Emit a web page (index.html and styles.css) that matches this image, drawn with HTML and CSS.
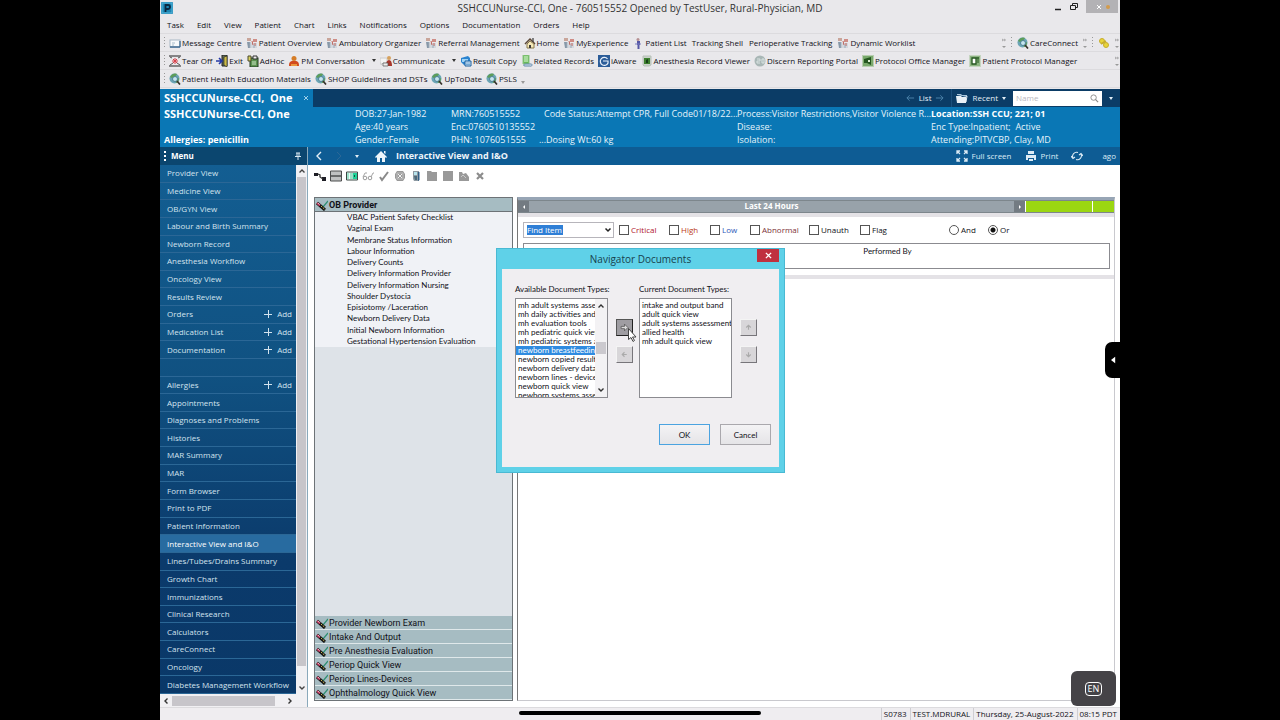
FILE: index.html
```html
<!DOCTYPE html>
<html lang="en">
<head>
<meta charset="utf-8">
<title>SSHCCUNurse-CCI, One - Interactive View and I&amp;O</title>
<link rel="stylesheet" href="styles.css">
</head>
<body>
<svg class="defs" aria-hidden="true">
  <symbol id="i-mail" viewBox="0 0 12 12"><rect x="1" y="3" width="10" height="7" fill="#f7fafc" stroke="#a9b8c5"/><path d="M1 10h10M11 4v6" stroke="#3f6b93" stroke-width="1.3"/><path d="M3 6h3M3 8h2" stroke="#a8bccb"/></symbol>
  <symbol id="i-people" viewBox="0 0 12 12"><rect x="1" y="1" width="4" height="3" fill="#c9a59a"/><rect x="7" y="2" width="4" height="3" fill="#cf8d86"/><path d="M1 5h3v6H2z" fill="#8798a8"/><path d="M5 6h6v5H5z" fill="#d3d8de"/><path d="M6 4l1 4M9 6v3" stroke="#bd5f57"/><path d="M4 5v6M8 8v3" stroke="#9aa9b8"/></symbol>
  <symbol id="i-home" viewBox="0 0 12 12"><path d="M1 7l5-5 5 5" fill="none" stroke="#5b4636" stroke-width="1.5"/><path d="M3 7l3-3 4 3v4H3z" fill="#f5e8b8" stroke="#8c7a4d"/><path d="M5 8h2v3H5z" fill="#3d3a3a"/><path d="M9 1v4" stroke="#444" stroke-width="1.3"/></symbol>
  <symbol id="i-person" viewBox="0 0 12 12"><circle cx="6" cy="2.500" r="1.500" fill="#b58f92"/><path d="M5 4h3v4H7.500v4h-2V8H5z" fill="#5557a5"/><path d="M3 7h6" stroke="#7c7fc0"/></symbol>
  <symbol id="i-tear" viewBox="0 0 12 12"><path d="M0 1h12M0 11h12" stroke="#222"/><path d="M1 2l2 1M11 2l-2 1M1 10l3-2M11 10L8 8" stroke="#555"/><path d="M6 3v6M3 6h6M4 4l4 4M8 4L4 8" stroke="#d8404a"/></symbol>
  <symbol id="i-exit" viewBox="0 0 12 12"><path d="M6 0h5v11H6z" fill="#5f6a55" stroke="#222"/><path d="M8 2l3-1v11l-3-2z" fill="#cdbc47" stroke="#222" stroke-width=".6"/><path d="M0 6h5M3 3l3 3-3 3" fill="none" stroke="#2438a8" stroke-width="1.600"/></symbol>
  <symbol id="i-adhoc" viewBox="0 0 12 12"><rect x="3" y="3" width="8" height="9" fill="#5d9350" stroke="#253b22"/><path d="M1 1h3v5H1z" fill="#d9d05f" stroke="#4b4b2f"/><path d="M6 1h4v3H6z" fill="#eee" stroke="#333"/><path d="M5 7h4M5 9h4" stroke="#cfe6c8"/></symbol>
  <symbol id="i-pm" viewBox="0 0 12 12"><circle cx="6" cy="3.500" r="2.500" fill="#d57d28"/><path d="M1 11c0-5 2-5 5-5s5 0 5 5z" fill="#d1491e"/><path d="M3 10h6" stroke="#f3b148" stroke-width="1.500"/></symbol>
  <symbol id="i-comm" viewBox="0 0 12 12"><path d="M0 3h7v5H3l-2 2V8H0z" fill="#f3f3f3" stroke="#ccc"/><circle cx="9" cy="3" r="2" fill="#d6a15e"/><path d="M6 11c0-4 1-6 3-6s3 2 3 6z" fill="#a8372c"/><path d="M3 8h5v3H3z" fill="#eee" stroke="#555" stroke-width=".7"/></symbol>
  <symbol id="i-copy" viewBox="0 0 12 12"><path d="M1 3l7-2 2 2v5l-6 2-3-3z" fill="#2a83d0"/><path d="M2 4h6v3H2z" fill="#9ed3f5"/><path d="M5 6h6v5H5z" fill="#cfe3f4" stroke="#1a5f9e"/><path d="M6 8h4M6 9.500h4" stroke="#4c91c8" stroke-width=".7"/></symbol>
  <symbol id="i-rel" viewBox="0 0 12 12"><path d="M2 0h6v9H2z" fill="#67b858" stroke="#8dc584"/><path d="M3 2h4M3 4h4M3 6h4" stroke="#e8ffe1"/><path d="M5 9h5c2 0 1 3-1 2H4c-2 0-2-2 1-2z" fill="#dce9f5" stroke="#6388aa"/></symbol>
  <symbol id="i-aware" viewBox="0 0 12 12"><rect width="12" height="12" fill="#2b5c98"/><path d="M9.500 4A4 4 0 1 0 10 8M5 6h5v2.500" fill="none" stroke="#e8f0fa" stroke-width="1.200"/></symbol>
  <symbol id="i-anes" viewBox="0 0 12 12"><path d="M2 1h8v9l-2 1H3l-1-1z" fill="#c8d2c8" stroke="#b7c0b7"/><rect x="3" y="3" width="6" height="6" fill="#3c7f2e"/><path d="M5 5l2-1v4H5z" fill="#173f18"/></symbol>
  <symbol id="i-disc" viewBox="0 0 12 12"><circle cx="6" cy="6" r="5.500" fill="#a9b7b6"/><path d="M3 4h3v2H3v2h3M8 4h2v4H8V4" fill="none" stroke="#d9e3e2"/></symbol>
  <symbol id="i-proto" viewBox="0 0 12 12"><rect x=".5" y=".5" width="11" height="11" fill="#79a96c" stroke="#b7cdb0"/><path d="M2 4l7-2v8L5 8H2z" fill="#24561f"/><path d="M6 5h2v2H6z" fill="#dbeecf"/></symbol>
  <symbol id="i-pproto" viewBox="0 0 12 12"><rect x=".5" y=".5" width="11" height="11" fill="#8db582" stroke="#c4d4bf"/><path d="M3 3h4v6H3z" fill="#fff" stroke="#24561f" stroke-width="1.300"/><path d="M7 3h3M9 2v6" stroke="#24561f"/></symbol>
  <symbol id="i-globe" viewBox="0 0 12 12"><circle cx="5.500" cy="5.500" r="5" fill="#6ba5b5"/><path d="M1 4c2-4 6-4 7-3L6 4 3 5zM6 7l4-2c0 3-1 5-3 5z" fill="#5d9d58"/><circle cx="6" cy="6" r="2.500" fill="#c5e5ef" stroke="#4d8296"/><path d="M8 8l3 3.500" stroke="#39342d" stroke-width="1.700"/></symbol>
  <symbol id="i-link" viewBox="0 0 12 12"><circle cx="4" cy="4" r="2.500" fill="#e8d43a" stroke="#c7ad2b"/><circle cx="8" cy="8" r="2.500" fill="#e8d43a" stroke="#c7ad2b"/><path d="M3 7l5-3" stroke="#c7ad2b" stroke-width="1.500"/></symbol>
  <symbol id="i-chev" viewBox="0 0 4 12"><path d="M0 2l1.500 1L0 4M2 2l1.500 1L2 4" fill="none" stroke="#888" stroke-width=".7"/><path d="M0 9h4l-2 2z" fill="#999"/></symbol>
  <symbol id="i-pen" viewBox="0 0 12 12"><path d="M5 6l2 2 5-6" fill="none" stroke="#2f8f72" stroke-width="1.200"/><path d="M1 4l8 7" stroke="#151515" stroke-width="3"/><path d="M1 4l3 2.500" stroke="#c33d62" stroke-width="2"/><path d="M5 7l4 3.500" stroke="#d1c356" stroke-width="1" stroke-dasharray="1.500 1"/><path d="M2 4l1.500 1.500" stroke="#f4d5dd" stroke-width=".8"/></symbol>
</svg>

<div class="app">
  <header class="titlebar">
    <svg class="logo" viewBox="0 0 12 12"><rect width="12" height="12" rx="1" fill="#1c86b4"/><path d="M1 1h10v10H1z" fill="none" stroke="#5bb6da"/><path d="M4.500 10V3H7a1.800 1.800 0 0 1 0 4H5" fill="none" stroke="#0a2740" stroke-width="1.800"/></svg>
    <h1>SSHCCUNurse-CCI, One - 760515552 Opened by TestUser, Rural-Physician, MD</h1>
    <div class="winbtns">
      <button aria-label="Minimize"><svg viewBox="0 0 8 8"><path d="M1 6.500h6" stroke="#222" stroke-width="1.500"/></svg></button>
      <button aria-label="Restore"><svg viewBox="0 0 8 8"><path d="M2.500 2.500v-2h5v4h-2" fill="none" stroke="#222"/><path d="M.5 2.500h5v4h-5z" fill="none" stroke="#222"/></svg></button>
      <button class="x" aria-label="Close"><svg viewBox="0 0 8 8"><path d="M2 2l4 4M6 2L2 6" stroke="#fff"/></svg><i></i></button>
    </div>
  </header>

  <nav class="menubar" aria-label="Application">
    <button>Task</button><button>Edit</button><button>View</button><button>Patient</button><button>Chart</button><button>Links</button><button>Notifications</button><button>Options</button><button>Documentation</button><button>Orders</button><button>Help</button>
  </nav>

  <div class="toolbars">
    <div class="toolbar">
      <i class="grip"></i>
      <button><svg><use href="#i-mail"/></svg>Message Centre</button>
      <button><svg><use href="#i-people"/></svg>Patient Overview</button>
      <button><svg><use href="#i-people"/></svg>Ambulatory Organizer</button>
      <button><svg><use href="#i-people"/></svg>Referral Management</button>
      <button><svg><use href="#i-home"/></svg>Home</button>
      <button><svg><use href="#i-people"/></svg>MyExperience</button>
      <button><svg><use href="#i-person"/></svg>Patient List</button>
      <button class="plain">Tracking Shell</button>
      <button class="plain">Perioperative Tracking</button>
      <button><svg><use href="#i-people"/></svg>Dynamic Worklist</button>
      <span class="right">
        <svg class="chev"><use href="#i-chev"/></svg><i class="grip"></i>
        <button><svg><use href="#i-globe"/></svg>CareConnect</button>
        <svg class="chev"><use href="#i-chev"/></svg><i class="grip"></i>
        <button aria-label="Shortcuts"><svg><use href="#i-link"/></svg></button>
        <svg class="chev"><use href="#i-chev"/></svg>
      </span>
    </div>
    <div class="toolbar">
      <i class="grip"></i>
      <button><svg><use href="#i-tear"/></svg>Tear Off</button>
      <button><svg><use href="#i-exit"/></svg>Exit</button>
      <button><svg><use href="#i-adhoc"/></svg>AdHoc</button>
      <button class="drop"><svg><use href="#i-pm"/></svg>PM Conversation</button>
      <button class="drop"><svg><use href="#i-comm"/></svg>Communicate</button>
      <button><svg><use href="#i-copy"/></svg>Result Copy</button>
      <button><svg><use href="#i-rel"/></svg>Related Records</button>
      <button><svg><use href="#i-aware"/></svg>iAware</button>
      <button><svg><use href="#i-anes"/></svg>Anesthesia Record Viewer</button>
      <button><svg><use href="#i-disc"/></svg>Discern Reporting Portal</button>
      <button><svg><use href="#i-proto"/></svg>Protocol Office Manager</button>
      <button><svg><use href="#i-pproto"/></svg>Patient Protocol Manager</button>
      <span class="right"><svg class="chev"><use href="#i-chev"/></svg></span>
    </div>
    <div class="toolbar">
      <i class="grip"></i>
      <button><svg><use href="#i-globe"/></svg>Patient Health Education Materials</button>
      <button><svg><use href="#i-globe"/></svg>SHOP Guidelines and DSTs</button>
      <button><svg><use href="#i-globe"/></svg>UpToDate</button>
      <button><svg><use href="#i-globe"/></svg>PSLS</button>
      <i class="tail"></i>
    </div>
  </div>

  <div class="tabs">
    <div class="tab">SSHCCUNurse-CCI,&nbsp; One <button aria-label="Close chart"><svg viewBox="0 0 6 6"><path d="M1 1l4 4M5 1L1 5" stroke="#9fd0ea"/></svg></button></div>
    <div class="finder">
      <button class="lst"><svg viewBox="0 0 10 8"><path d="M9 4H1M4 1L1 4l3 3" fill="none" stroke="#4f87ae"/></svg>List<svg viewBox="0 0 10 8"><path d="M1 4h8M6 1l3 3-3 3" fill="none" stroke="#4f87ae"/></svg></button>
      <button class="recent"><svg viewBox="0 0 12 10"><path d="M1 2V1h4l1 1h5v2" fill="#a9c6dc"/><path d="M0 3h5l1 1h4v6H1z" fill="#e9f1f7"/><path d="M10 9l1-6" stroke="#e9f1f7"/></svg>Recent<i class="down"></i></button>
      <label class="search"><input type="text" placeholder="Name" aria-label="Name"><svg viewBox="0 0 10 10"><circle cx="4" cy="4" r="3" fill="none" stroke="#888"/><path d="M6 6l3 3" stroke="#888" stroke-width="1.300"/></svg></label>
      <button aria-label="Search options"><i class="down"></i></button>
    </div>
  </div>

  <section class="banner" aria-label="Patient">
    <div class="who"><strong class="name">SSHCCUNurse-CCI, One</strong><span></span><strong>Allergies: penicillin</strong></div>
    <div><span>DOB:27-Jan-1982</span><span>Age:40 years</span><span>Gender:Female</span></div>
    <div><span>MRN:760515552</span><span>Enc:0760510135552</span><span>PHN: 1076051555</span></div>
    <div class="code"><span>Code Status:Attempt CPR, Full Code01/18/22...</span><span></span><span class="dose">...Dosing Wt:60 kg</span></div>
    <div><span>Process:Visitor Restrictions,Visitor Violence R...</span><span>Disease:</span><span>Isolation:</span></div>
    <div><strong>Location:SSH CCU; 221; 01</strong><span>Enc Type:Inpatient;&nbsp; Active</span><span>Attending:PITVCBP, Clay, MD</span></div>
  </section>

  <div class="work">
    <aside class="side">
      <div class="sidehead"><i class="grip"></i><strong>Menu</strong><svg viewBox="0 0 6 8"><path d="M1 1h4M2 1v3M4 1v3M0 4.500h6M3 4v4" stroke="#dbe9f3" fill="none"/></svg></div>
      <div class="sidebody">
        <ul class="menu">
          <li><a href="#">Provider View</a></li>
          <li><a href="#">Medicine View</a></li>
          <li><a href="#">OB/GYN View</a></li>
          <li><a href="#">Labour and Birth Summary</a></li>
          <li><a href="#">Newborn Record</a></li>
          <li><a href="#">Anesthesia Workflow</a></li>
          <li><a href="#">Oncology View</a></li>
          <li><a href="#">Results Review</a></li>
          <li><a href="#">Orders</a><button><i class="plus"></i>Add</button></li>
          <li><a href="#">Medication List</a><button><i class="plus"></i>Add</button></li>
          <li><a href="#">Documentation</a><button><i class="plus"></i>Add</button></li>
          <li></li>
          <li><a href="#">Allergies</a><button><i class="plus"></i>Add</button></li>
          <li><a href="#">Appointments</a></li>
          <li><a href="#">Diagnoses and Problems</a></li>
          <li><a href="#">Histories</a></li>
          <li><a href="#">MAR Summary</a></li>
          <li><a href="#">MAR</a></li>
          <li><a href="#">Form Browser</a></li>
          <li><a href="#">Print to PDF</a></li>
          <li><a href="#">Patient Information</a></li>
          <li class="on"><a href="#">Interactive View and I&amp;O</a></li>
          <li><a href="#">Lines/Tubes/Drains Summary</a></li>
          <li><a href="#">Growth Chart</a></li>
          <li><a href="#">Immunizations</a></li>
          <li><a href="#">Clinical Research</a></li>
          <li><a href="#">Calculators</a></li>
          <li><a href="#">CareConnect</a></li>
          <li><a href="#">Oncology</a></li>
          <li><a href="#">Diabetes Management Workflow</a></li>
        </ul>
        <div class="vscroll"><svg viewBox="0 0 8 8"><path d="M1.500 5.500L4 3l2.500 2.500" fill="none" stroke="#444" stroke-width="1.400"/></svg><i></i><svg viewBox="0 0 8 8"><path d="M1.500 2.500L4 5l2.500-2.500" fill="none" stroke="#444" stroke-width="1.400"/></svg></div>
      </div>
      <div class="hscroll"><svg viewBox="0 0 8 8"><path d="M5.500 1.500L3 4l2.500 2.500" fill="none" stroke="#333" stroke-width="1.400"/></svg><i></i><svg viewBox="0 0 8 8"><path d="M2.500 1.500L5 4 2.500 6.500" fill="none" stroke="#333" stroke-width="1.400"/></svg></div>
    </aside>

    <main class="main">
      <div class="crumb">
        <button aria-label="Back"><svg viewBox="0 0 8 10"><path d="M6 1L2 5l4 4" fill="none" stroke="#e3eef6" stroke-width="1.400"/></svg></button>
        <button class="fwd" aria-label="Forward"><svg viewBox="0 0 8 10"><path d="M2 1l4 4-4 4" fill="none" stroke="#2b6796"/></svg></button>
        <button class="hist" aria-label="History"><i class="down"></i></button>
        <button class="home" aria-label="Home"><svg viewBox="0 0 12 12"><path d="M0 7l6-6 6 6-1 1-1-1v5H7V8H5v4H2V7L1 8z" fill="#eef5fa"/><path d="M9 1h1.500v3L9 3z" fill="#eef5fa"/></svg></button>
        <h2>Interactive View and I&amp;O</h2>
        <div class="acts">
          <button><svg viewBox="0 0 12 12"><path d="M1 4V1h3M8 1h3v3M11 8v3H8M4 11H1V8M1 1l3 3M11 1L8 4M11 11L8 8M1 11l3-3" fill="none" stroke="#dcebf5" stroke-width="1.300"/></svg>Full screen</button>
          <button><svg viewBox="0 0 12 12"><path d="M3 1h6v3H3z" fill="#dcebf5"/><path d="M1 5h10v5H9V8H3v2H1z" fill="#dcebf5"/><path d="M4 9h4v2H4z" fill="#dcebf5"/></svg>Print</button>
          <button aria-label="Refresh"><svg viewBox="0 0 12 12"><path d="M2 8a4 4 0 0 1 5-5.500M10 4a4 4 0 0 1-5 5.500M0 6l2 2.500L4 7M8 5l2-1.500L12 6" fill="none" stroke="#dcebf5" stroke-width="1.100"/></svg></button>
          <span>ago</span>
        </div>
      </div>

      <div class="content">
        <div class="tools">
          <button aria-label="Navigator"><svg viewBox="0 0 12 12"><path d="M0 3h4v3H0zM8 7h4v4H8z" fill="#1d1d25"/><path d="M4 4l2 1v2l3 2" fill="none" stroke="#333" stroke-width="1.300"/></svg></button>
          <button aria-label="Rows"><svg viewBox="0 0 12 12"><path d="M.5 1h11v5H.5zM.5 6h11v5H.5z" fill="#bfc1c1" stroke="#4c4e4e"/></svg></button>
          <button aria-label="Split"><svg viewBox="0 0 12 12"><path d="M.5 2h11v8H.5z" fill="#eafaf4" stroke="#3d4844"/><path d="M1 3h2v6H1z" fill="#9fe3cb"/><path d="M4 4h3M4 6h3M4 8h3" stroke="#4dc59b"/><path d="M7 3h4v6H7z" fill="#1fd39a"/><path d="M8 5h1v2H8z" fill="#12543e"/></svg></button>
          <button aria-label="View"><svg viewBox="0 0 12 12"><circle cx="3" cy="8" r="1.800" fill="none" stroke="#9a9a9a"/><circle cx="8" cy="8" r="1.800" fill="none" stroke="#9a9a9a"/><path d="M1 7l2-4h2M9 7l2-4h1" fill="none" stroke="#a5a5a5"/></svg></button>
          <button aria-label="Sign"><svg viewBox="0 0 12 12"><path d="M2 7l2 3 6-8" fill="none" stroke="#8a8a8a" stroke-width="2"/></svg></button>
          <button aria-label="Cancel charting"><svg viewBox="0 0 12 12"><path d="M3 1h6l2 3v4l-2 3H3L1 8V4z" fill="#999"/><path d="M4 4l4 4M8 4L4 8" stroke="#f2f2f2"/><path d="M3 3h6v6H3z" fill="none" stroke="#ddd" stroke-width=".6"/></svg></button>
          <button aria-label="Device"><svg viewBox="0 0 12 12"><path d="M3 1h6v10H4L3 9z" fill="#8e9aa2"/><path d="M4 2h3v3H4z" fill="#b8e4ec"/><path d="M4 6h3v4H5z" fill="#4b6a7c"/><path d="M8 2h1.500v8L8 11z" fill="#315f86"/></svg></button>
          <button aria-label="Chart"><svg viewBox="0 0 12 12"><path d="M1 1h4l1 1h5v9H1z" fill="#999"/></svg></button>
          <button aria-label="Calculate"><svg viewBox="0 0 12 12"><path d="M1 1h10v10H1z" fill="#999"/></svg></button>
          <button aria-label="Folder"><svg viewBox="0 0 12 12"><path d="M1 3V2h3l1 2 3-1 3 4v4H1z" fill="#999"/><path d="M3 7l2-2 3 3" fill="none" stroke="#c9c9c9"/></svg></button>
          <button aria-label="Delete"><svg viewBox="0 0 12 12"><path d="M3 3l6 6M9 3L3 9" stroke="#8c8c8c" stroke-width="2.200"/></svg></button>
        </div>

        <div class="panes">
          <section class="nav">
            <button class="band open"><svg><use href="#i-pen"/></svg>OB Provider</button>
            <ul>
              <li>VBAC Patient Safety Checklist</li><li>Vaginal Exam</li><li>Membrane Status Information</li><li>Labour Information</li><li>Delivery Counts</li><li>Delivery Information Provider</li><li>Delivery Information Nursing</li><li>Shoulder Dystocia</li><li>Episiotomy /Laceration</li><li>Newborn Delivery Data</li><li>Initial Newborn Information</li><li>Gestational Hypertension Evaluation</li>
            </ul>
            <div class="bands">
              <button class="band"><svg><use href="#i-pen"/></svg>Provider Newborn Exam</button>
              <button class="band"><svg><use href="#i-pen"/></svg>Intake And Output</button>
              <button class="band"><svg><use href="#i-pen"/></svg>Pre Anesthesia Evaluation</button>
              <button class="band"><svg><use href="#i-pen"/></svg>Periop Quick View</button>
              <button class="band"><svg><use href="#i-pen"/></svg>Periop Lines-Devices</button>
              <button class="band"><svg><use href="#i-pen"/></svg>Ophthalmology Quick View</button>
            </div>
          </section>

          <section class="sheet">
            <div class="range">
              <button aria-label="Earlier"><svg viewBox="0 0 8 8"><path d="M5 2v4L3 4z" fill="#fff"/></svg></button>
              <strong>Last 24 Hours</strong>
              <button aria-label="Later"><svg viewBox="0 0 8 8"><path d="M3 2v4l2-2z" fill="#fff"/></svg></button>
              <i class="green"></i><i class="green last"></i>
            </div>
            <form class="filters">
              <span class="combo"><select aria-label="Find Item"><option>Find Item</option></select><svg viewBox="0 0 8 8"><path d="M1.500 2.500L4 5l2.500-2.500" fill="none" stroke="#222" stroke-width="1.500"/></svg></span>
              <label class="c1"><input type="checkbox">Critical</label>
              <label class="c2"><input type="checkbox">High</label>
              <label class="c3"><input type="checkbox">Low</label>
              <label class="c4"><input type="checkbox">Abnormal</label>
              <label class="c5"><input type="checkbox">Unauth</label>
              <label class="c6"><input type="checkbox">Flag</label>
              <label class="c7"><input type="radio" name="mode">And</label>
              <label class="c8"><input type="radio" name="mode" checked>Or</label>
            </form>
            <table class="result"><tr><th></th><th>Performed By</th></tr></table>
            <div class="grid"></div>
          </section>
        </div>
      </div>
    </main>
  </div>

  <footer class="status"><span>S0783</span><span>TEST.MDRURAL</span><span>Thursday, 25-August-2022</span><span>08:15 PDT</span></footer>

  <div class="dialog" role="dialog" aria-labelledby="dlg">
    <div class="dhead"><h2 id="dlg">Navigator Documents</h2><button aria-label="Close"><svg viewBox="0 0 8 8"><path d="M1 1l6 6M7 1L1 7" stroke="#fff" stroke-width="1.500"/></svg></button></div>
    <div class="dbody">
      <div class="lists">
        <div class="col">
          <h3 id="av">Available Document Types:</h3>
          <div class="box">
            <ul role="listbox" aria-labelledby="av">
              <li role="option">mh adult systems asses</li><li role="option">mh daily activities and a</li><li role="option">mh evaluation tools</li><li role="option">mh pediatric quick view</li><li role="option">mh pediatric systems as</li><li role="option" class="sel" aria-selected="true">newborn breastfeeding</li><li role="option">newborn copied results</li><li role="option">newborn delivery data</li><li role="option">newborn lines - devices</li><li role="option">newborn quick view</li><li role="option">newborn systems asses</li>
            </ul>
            <div class="dscroll"><svg viewBox="0 0 8 8"><path d="M1.500 5.500L4 3l2.500 2.500" fill="none" stroke="#333" stroke-width="1.400"/></svg><i></i><svg viewBox="0 0 8 8"><path d="M1.500 2.500L4 5l2.500-2.500" fill="none" stroke="#333" stroke-width="1.400"/></svg></div>
          </div>
        </div>
        <div class="move">
          <button class="hot" aria-label="Add"><svg viewBox="0 0 8 8"><path d="M1 3h3V1l3 3-3 3V5H1z" fill="#ddd" stroke="#555" stroke-width=".7"/></svg></button>
          <button aria-label="Remove"><svg viewBox="0 0 8 8"><path d="M6 4H2M4 2L2 4l2 2" fill="none" stroke="#aaa"/></svg></button>
        </div>
        <div class="col">
          <h3 id="cu">Current Document Types:</h3>
          <div class="box">
            <ul role="listbox" aria-labelledby="cu">
              <li role="option">intake and output band</li><li role="option">adult quick view</li><li role="option">adult systems assessment</li><li role="option">allied health</li><li role="option">mh adult quick view</li>
            </ul>
          </div>
        </div>
        <div class="move">
          <button aria-label="Move up"><svg viewBox="0 0 8 8"><path d="M4 6V2M2 4l2-2 2 2" fill="none" stroke="#aaa"/></svg></button>
          <button aria-label="Move down"><svg viewBox="0 0 8 8"><path d="M4 2v4M2 4l2 2 2-2" fill="none" stroke="#aaa"/></svg></button>
        </div>
      </div>
      <div class="dbtns"><button class="ok">OK</button><button>Cancel</button></div>
    </div>
    <svg class="cursor" viewBox="0 0 9 14"><path d="M.5.5v11l2.500-2 2 4 1.500-1-2-3.500H8z" fill="#fff" stroke="#444"/></svg>
  </div>

  <button class="lang" aria-label="Language"><span>EN</span></button>
  <button class="pull" aria-label="Open panel"><svg viewBox="0 0 6 8"><path d="M5 0v8L0 4z" fill="#fff"/></svg></button>
  <i class="homebar"></i>
</div>
</body>
</html>
```

FILE: styles.css
```css
* { box-sizing: border-box; margin: 0; padding: 0; }
body { background: #000; font: 8px/12px "Open Sans", "Noto Sans", sans-serif; color: #111118; }
button, input, select { font: inherit; color: inherit; background: none; border: 0; }
button { display: flex; align-items: center; white-space: nowrap; }
h1, h2, h3 { font-size: inherit; font-weight: 400; }
ul { list-style: none; }
a { color: inherit; text-decoration: none; }
svg { display: block; flex: none; }
.defs { display: none; }
.down { width: 0; height: 0; border: 2px solid transparent; border-top: 3px solid #e3eef6; border-bottom: 0; }

.app { position: relative; width: 75%; height: 100vh; margin: 0 auto; display: flex; flex-direction: column; background: #e9e8eb; overflow: hidden; }

.titlebar { display: grid; grid-template-columns: 1fr auto 1fr; align-items: center; height: 16px; font-size: 10px; }
.titlebar h1 { color: #333; }
.logo { width: 12px; height: 12px; margin-left: 1px; }
.winbtns { display: flex; justify-content: flex-end; gap: 8px; align-self: start; padding-right: 2px; }
.winbtns svg { width: 8px; height: 8px; }
.winbtns .x { width: 32px; height: 13px; background: #b3b2b5; justify-content: center; gap: 3px; }
.x i { width: 4px; height: 4px; border-radius: 2px; background: #d39b4c; }

.menubar { display: flex; gap: 13px; height: 17px; padding-left: 7px; align-items: center; }

.toolbars { border-top: 1px solid #dcdbde; padding-bottom: 1px; }
.toolbar { display: flex; align-items: center; gap: 4px; height: 18px; padding-left: 4px; border-bottom: 1px solid #dcdbde; }
.toolbar button { gap: 1px; }
.toolbar button svg { width: 12px; height: 12px; }
.toolbar .plain { padding: 0 1px; }
.toolbar .chev { width: 4px; height: 12px; }
.tail { align-self: flex-end; margin-bottom: 3px; border: 2px solid transparent; border-top: 3px solid #999; border-bottom: 0; }
.grip { width: 1px; height: 11px; background: repeating-linear-gradient(#999 0 1px, transparent 1px 3px); }
.right { display: flex; align-items: center; gap: 5px; margin-left: auto; padding-right: 1px; }
.drop::after { content: ""; margin-left: 6px; border: 2px solid transparent; border-top: 3px solid #333; border-bottom: 0; }

.tabs { display: flex; justify-content: space-between; height: 18px; background: #0b3c66; color: #e3eef6; }
.tab { display: flex; align-items: center; justify-content: space-between; width: 153px; padding: 0 4px; background: #0a77b5; font-size: 11px; font-weight: 700; color: #fff; }
.tab svg { width: 6px; height: 6px; }
.finder { display: flex; align-items: center; gap: 7px; padding-right: 7px; }
.lst, .recent { gap: 4px; }
.lst svg { width: 9px; height: 8px; }
.recent { border-left: 1px solid #1b4f7c; padding-left: 4px; height: 18px; }
.recent svg { width: 12px; height: 10px; }
.search { display: flex; align-items: center; width: 89px; height: 15px; background: #fff; padding: 0 3px; }
.search input { flex: 1; min-width: 0; outline: 0; color: #333; }
.search input::placeholder { color: #b9b9c2; }
.search svg { width: 9px; height: 9px; }

.banner { display: grid; grid-template-columns: 191px 96px 93px 193px 194px 1fr; padding: 0 0 1px 4px; background: #0a77b5; color: #e6f3fa; font-size: 9px; }
.banner > div { display: grid; grid-template-rows: repeat(3, 13px); white-space: nowrap; line-height: 13px; }
.banner strong { color: #fff; }
.banner .name { font-size: 11px; }
.dose { margin-left: -5px; }

.work { display: flex; flex: 1; min-height: 0; background: #fff; }
.side { display: flex; flex-direction: column; width: 148px; background: #f1f0f3; border-right: 1px solid #8aa9bb; }
.sidehead { display: flex; align-items: center; gap: 5px; height: 18px; padding: 0 6px 0 4px; background: #0b466f; color: #fff; }
.sidehead .grip { width: 2px; background: repeating-linear-gradient(#fff 0 2px, transparent 2px 4px); }
.sidehead svg { width: 6px; height: 8px; margin-left: auto; }
.sidebody { display: flex; flex: 1; min-height: 0; }
.menu { flex: 1; display: grid; grid-auto-rows: minmax(0, 1fr); background: linear-gradient(#135e92, #105181 40%, #0b3a6b 75%, #0a3868); color: #d3e3ee; }
.menu li { display: flex; align-items: center; justify-content: space-between; padding: 0 4px 0 7px; border-bottom: 1px solid #2b6796; }
.menu .on { background: #286ba0; color: #fff; }
.menu button { gap: 5px; }
.plus { width: 8px; height: 8px; background: linear-gradient(#d3e3ee, #d3e3ee) center / 8px 1px no-repeat, linear-gradient(#d3e3ee, #d3e3ee) center / 1px 8px no-repeat; }
.vscroll { display: flex; flex-direction: column; align-items: center; width: 11px; padding: 2px 0; }
.vscroll i { width: 9px; flex: 1; margin: 2px 0 18px; background: #c7c5ca; }
.vscroll svg, .hscroll svg { width: 8px; height: 8px; }
.hscroll { display: flex; align-items: center; height: 13px; padding: 0 13px 0 2px; }
.hscroll i { flex: 1; height: 10px; margin: 0 11px 0 2px; background: #c7c5ca; }

.main { flex: 1; min-width: 0; display: flex; flex-direction: column; }
.crumb { display: flex; align-items: center; height: 18px; padding: 0 4px 0 7px; gap: 12px; background: #0e5c94; color: #dcebf5; }
.crumb svg { width: 8px; height: 10px; }
.crumb h2 { font-size: 9px; font-weight: 700; color: #eef5fa; margin-left: -3px; }
.crumb .home svg, .acts svg { width: 12px; height: 12px; }
.hist { margin-right: 4px; }
.acts { display: flex; align-items: center; gap: 13px; margin-left: auto; }
.acts button { gap: 4px; }
.acts span { margin-left: 6px; }
.content { flex: 1; min-height: 0; display: flex; flex-direction: column; padding: 5px 5px 6px 6px; }
.tools { display: flex; gap: 4px; height: 27px; align-items: flex-start; }
.tools svg { width: 12px; height: 12px; }

.panes { flex: 1; min-height: 0; display: flex; gap: 4px; }
.nav { width: 199px; display: flex; flex-direction: column; border: 1px solid #6d7377; background: #dee3e8; }
.nav ul { display: grid; grid-auto-rows: 1fr; height: 135px; padding-left: 32px; background: #f0f2f6; font-family: Lato, sans-serif; align-items: center; }
.nav li { line-height: 11px; }
.band { width: 100%; height: 14px; gap: 1px; padding-left: 1px; background: #a6bcc2; border-bottom: 1px solid #dfe8ea; font: 9px/12px Roboto, "Liberation Sans", sans-serif; }
.band svg { width: 12px; height: 12px; }
.band.open { font-weight: 700; border-bottom-color: #6d7377; }
.bands { margin-top: auto; }

.sheet { flex: 1; min-width: 0; display: flex; flex-direction: column; border: 1px solid #c9c9ce; border-top: 3px solid #97a5b5; border-left-color: #777; }
.range { display: flex; height: 13px; background: #98a2aa; border: solid #7d868c; border-width: 1px 0; color: #fff; }
.range strong { flex: 1; text-align: center; line-height: 10px; }
.range button { width: 11px; justify-content: center; background: #737b82; }
.range svg { width: 8px; height: 8px; }
.green { width: 67px; background: #9bd611; border-left: 1px solid #fff; }
.green.last { width: 22px; }
.filters { display: grid; grid-template-columns: 96px 50px 41px 40px 59px 51px 89px 39px 1fr; align-items: center; height: 30px; padding-left: 5px; border-top: 4px solid #e4e2e6; }
.combo { position: relative; width: 91px; }
.combo svg { position: absolute; right: 2px; top: 4px; width: 8px; height: 8px; pointer-events: none; }
.filters select { display: block; width: 100%; height: 16px; padding: 0 3px; appearance: none; border: 1px solid #b7b5bb; color: #fff; background: linear-gradient(#2f7fd6, #2f7fd6) 3px 2px / 36px 10px no-repeat; outline: 0; }
.filters label { display: flex; align-items: center; gap: 2px; }
.filters input { appearance: none; width: 10px; height: 10px; border: 1px solid #555; background: #fff; }
.filters input[type="radio"] { border-radius: 5px; }
.filters input:checked { background: radial-gradient(#111 0 2px, #fff 3px); }
.c1 { color: #b0122c; } .c2 { color: #bb3a1a; } .c3 { color: #2c57b8; } .c4 { color: #7d3138; }
.result { table-layout: fixed; width: auto; height: 26px; margin: 0 4px 6px 5px; border: 1px solid #8b8b90; border-spacing: 0; font-family: Lato, sans-serif; }
.result th { width: 42%; font-weight: 400; text-align: left; vertical-align: top; padding-top: 1px; }
.result th:first-child { width: 58%; }
.grid { flex: 1; border-top: 4px solid #e4e2e6; }

.status { display: flex; justify-content: flex-end; height: 13px; background: #efedf0; border-top: 1px solid #dcdbde; }
.status span { padding: 0 3px 0 2px; border-left: 1px solid #cfced2; }

.dialog { position: absolute; left: 35%; top: 248px; width: 289px; padding: 0 5px 5px; background: #5fd1e8; border: 1px solid #49b9d3; font-family: Lato, sans-serif; }
.dhead { display: grid; grid-template-columns: 22px 1fr 22px; height: 20px; }
.dhead h2 { grid-column: 2; font: 10px/20px "Open Sans", sans-serif; text-align: center; color: #18414d; }
.dhead button { height: 13px; justify-content: center; background: #c0303f; }
.dhead svg { width: 7px; height: 7px; }
.dbody { height: 198px; padding: 14px 8px 0 13px; background: #f0eef1; }
.lists { display: flex; }
.col { width: 93px; }
.col h3 { line-height: 12px; margin-bottom: 3px; white-space: nowrap; }
.box { display: flex; height: 100px; background: #fff; border: 1px solid #8b8b90; overflow: hidden; }
.box ul { flex: 1; min-width: 0; padding: 2px 0 0; }
.box li { padding-left: 2px; line-height: 9px; overflow: hidden; white-space: nowrap; }
.sel { background: #2f8be0; color: #fff; }
.dscroll { display: flex; flex-direction: column; justify-content: space-between; align-items: center; width: 12px; padding: 3px 0; background: #f3f2f4; }
.dscroll i { width: 10px; height: 12px; margin-top: 0; background: #cbc9ce; }
.dscroll svg { width: 8px; height: 8px; }
.move { display: flex; flex-direction: column; gap: 10px; width: 31px; padding: 36px 0 0 8px; }
.move button { width: 17px; height: 17px; justify-content: center; background: #d8d6d9; border: 1px solid; border-color: #f4f4f4 #77757a #77757a #f4f4f4; }
.move svg { width: 9px; height: 9px; }
.move .hot { background: #9f9da2; border-color: #555 #222 #222 #555; }
.dbtns { display: flex; justify-content: flex-end; gap: 10px; margin-top: 26px; }
.dbtns button { width: 51px; height: 21px; justify-content: center; background: linear-gradient(#f4f3f5, #e5e4e7); border: 1px solid #aaa8ad; }
.dbtns .ok { border-color: #4ba3e0; }
.cursor { position: absolute; left: 131px; top: 79px; width: 9px; height: 14px; }

.lang { position: absolute; right: 4px; bottom: 14px; width: 45px; height: 35px; justify-content: center; border-radius: 6px; background: #454347; color: #fff; font-size: 9px; }
.lang span { padding: 0 2px; border: 1px solid #fff; border-radius: 4px; }
.pull { position: absolute; right: 0; top: 342px; width: 15px; height: 36px; padding-left: 6px; border-radius: 7px 0 0 7px; background: #000; }
.pull svg { width: 5px; height: 8px; }
.homebar { position: absolute; left: 50%; bottom: 5px; width: 242px; height: 4px; margin-left: -121px; border-radius: 2px; background: #000; }
```
